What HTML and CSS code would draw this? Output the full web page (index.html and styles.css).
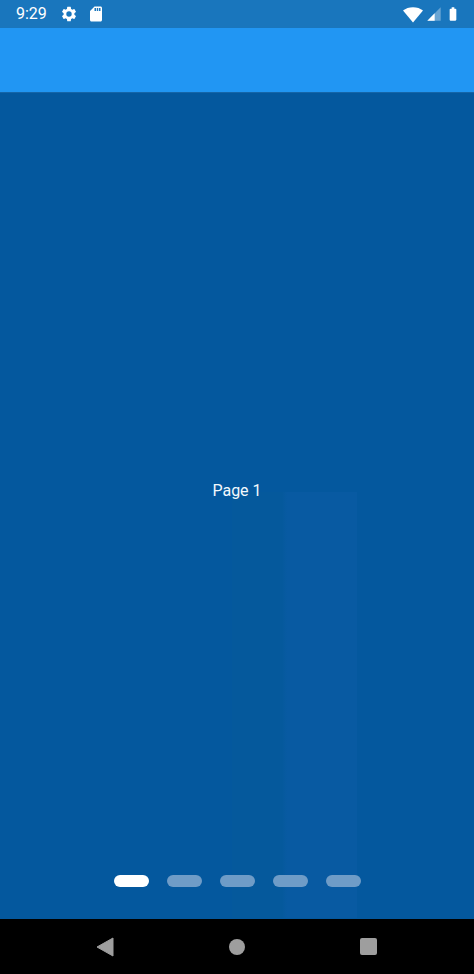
FILE: index.html
```html
<!DOCTYPE html>
<html lang="en">
<head>
<meta charset="utf-8">
<title>Page 1</title>
<link rel="stylesheet" href="styles.css">
</head>
<body>
<div class="screen">
  <header class="status">
    <div class="status-left">
      <span class="time">9:29</span>
      <svg class="ico" width="18" height="18" viewBox="0 0 24 24"><path fill="#fff" d="M19.14 12.94c.04-.3.06-.61.06-.94s-.02-.64-.07-.94l2.03-1.58a.49.49 0 0 0 .12-.61l-1.92-3.32a.49.49 0 0 0-.59-.22l-2.39.96a7 7 0 0 0-1.62-.94l-.36-2.54a.48.48 0 0 0-.48-.41h-3.84a.48.48 0 0 0-.47.41l-.36 2.54c-.59.24-1.13.57-1.62.94l-2.39-.96a.49.49 0 0 0-.59.22L2.74 8.87a.48.48 0 0 0 .12.61l2.03 1.58c-.05.3-.09.63-.09.94s.02.64.07.94l-2.03 1.58a.49.49 0 0 0-.12.61l1.92 3.32c.12.22.37.29.59.22l2.39-.96c.5.38 1.03.7 1.62.94l.36 2.54c.05.24.24.41.48.41h3.84c.24 0 .44-.17.47-.41l.36-2.54c.59-.24 1.13-.56 1.62-.94l2.39.96c.22.08.47 0 .59-.22l1.92-3.32a.48.48 0 0 0-.12-.61l-2.01-1.58zM12 15.6a3.6 3.6 0 1 1 0-7.2 3.6 3.6 0 0 1 0 7.2z"/></svg>
      <svg class="ico" width="18" height="18" viewBox="0 0 24 24"><path fill="#fff" d="M18 2h-8L4 8v12c0 1.1.9 2 2 2h12c1.1 0 2-.9 2-2V4c0-1.1-.9-2-2-2zm-6 6h-2V4h2v4zm3 0h-2V4h2v4zm3 0h-2V4h2v4z"/></svg>
    </div>
    <div class="status-right">
      <svg width="20" height="18" viewBox="0 0 24 21.600"><path fill="#fff" d="M12 21 0 6.600C3.200 4 7.400 2.600 12 2.600S20.800 4 24 6.600z"/></svg>
      <svg width="16" height="16" viewBox="0 0 24 24"><path fill="#fff" fill-opacity=".35" d="M22 2v20H2z"/><path fill="#fff" d="M13 11v11H2z"/></svg>
      <svg width="16" height="18" viewBox="0 0 24 24"><path fill="#fff" d="M15.700 4H14V2h-4v2H8.300C7.600 4 7 4.600 7 5.300v15.300C7 21.400 7.600 22 8.300 22h7.300c.800 0 1.400-.600 1.400-1.300V5.300C17 4.600 16.400 4 15.700 4z"/></svg>
    </div>
  </header>
  <div class="appbar"></div>
  <main class="page">
    <div class="ghost"></div>
    <p class="label">Page 1</p>
    <div class="dots">
      <span class="dot active"></span>
      <span class="dot"></span>
      <span class="dot"></span>
      <span class="dot"></span>
      <span class="dot"></span>
    </div>
  </main>
  <nav class="navbar">
    <svg width="18" height="20" viewBox="0 0 18 20"><path fill="#9e9e9e" d="M17 1v18L1 10z" stroke="#9e9e9e" stroke-linejoin="round"/></svg>
    <span class="home"></span>
    <span class="recent"></span>
  </nav>
</div>
</body>
</html>
```
FILE: styles.css
```css
* { box-sizing: border-box; }
html, body { margin: 0; padding: 0; }
body { width: 474px; height: 974px; overflow: hidden; font-family: Roboto, "Liberation Sans", sans-serif; color: #fff; }
.screen { display: flex; flex-direction: column; height: 974px; }
.status { height: 28px; background: #1976bd; display: flex; justify-content: space-between; align-items: center; padding: 0 13px 1px 16px; }
.status-left { display: flex; align-items: center; gap: 9px; }
.time { font-size: 16px; font-weight: 400; margin-right: 4px; }
.ico, .status-right svg { display: block; }
.status-right { display: flex; align-items: center; gap: 3px; }
.appbar { height: 65px; background: #2196f3; border-bottom: 1px solid #1565a8; }
.page { flex: 1; position: relative; display: flex; flex-direction: column; align-items: center; background: #04589e; }
.ghost { position: absolute; left: 232px; top: 399px; width: 125px; height: 426px; background: linear-gradient(90deg, #05599c 0, #05599c 50px, #085aa2 55px); }
.label { position: relative; margin: 388px 0 0; font-size: 16px; line-height: 20px; color: #f2f8fd; }
.dots { position: relative; margin-top: 374px; display: flex; gap: 18px; }
.dot { width: 35px; height: 12px; border-radius: 6px; background: #6f9cc7; }
.dot.active { background: #fff; }
.navbar { height: 55px; background: #000; display: flex; align-items: center; position: relative; padding: 0 97px 0 96px; justify-content: space-between; }
.home { width: 16px; height: 16px; border-radius: 50%; background: #9e9e9e; }
.recent { width: 17px; height: 17px; border-radius: 2px; background: #9e9e9e; }
```
